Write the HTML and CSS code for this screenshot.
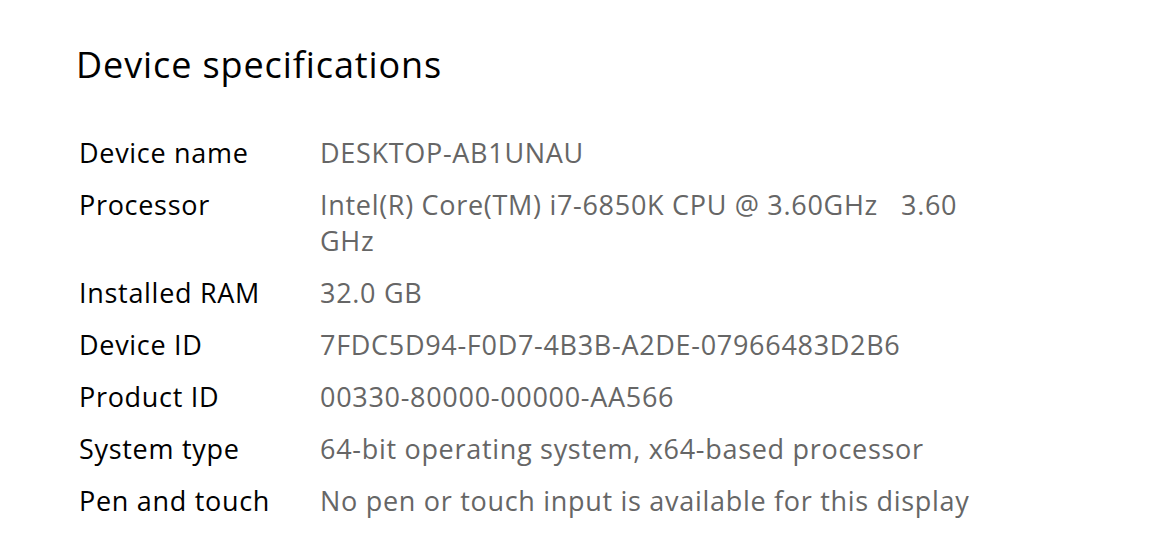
FILE: index.html
```html
<!DOCTYPE html>
<html lang="en">
<head>
    <meta charset="UTF-8">
    <meta name="viewport" content="width=device-width, initial-scale=1.0">
    <title>About</title>
    <link rel="stylesheet" href="styles.css">
</head>
<body>

    <div class="container">
        <h1>Device specifications</h1>

        <div class="specs">
            <div class="spec-row">
                <div class="spec-label">Device name</div>
                <div class="spec-value">DESKTOP-AB1UNAU</div>
            </div>
            <div class="spec-row">
                <div class="spec-label">Processor</div>
                <div class="spec-value">Intel(R) Core(TM) i7-6850K CPU @ 3.60GHz   3.60 GHz</div>
            </div>
            <div class="spec-row">
                <div class="spec-label">Installed RAM</div>
                <div class="spec-value">32.0 GB</div>
            </div>
            <div class="spec-row">
                <div class="spec-label">Device ID</div>
                <div class="spec-value">7FDC5D94-F0D7-4B3B-A2DE-07966483D2B6</div>
            </div>
            <div class="spec-row">
                <div class="spec-label">Product ID</div>
                <div class="spec-value">00330-80000-00000-AA566</div>
            </div>
            <div class="spec-row">
                <div class="spec-label">System type</div>
                <div class="spec-value">64-bit operating system, x64-based processor</div>
            </div>
            <div class="spec-row">
                <div class="spec-label">Pen and touch</div>
                <div class="spec-value">No pen or touch input is available for this display</div>
            </div>
        </div>
    </div>

</body>
</html>
```

FILE: styles.css
```css
body {
    font-family: "Open Sans", "Noto Sans", sans-serif;
    background-color: #fff;
    color: #000;
    margin: 0;
    padding: 0;
}

.container {
    padding: 43px 0 0 76px;
}

h1 {
    font-size: 36px;
    font-weight: normal;
    line-height: 44px;
    letter-spacing: 0.9px;
    margin: 0 0 48px 0;
}

.specs {
    display: flex;
    flex-direction: column;
    gap: 16px;
    margin-left: 3px;
}

.spec-row {
    display: grid;
    grid-template-columns: 241px 670px;
    font-size: 27px;
    line-height: 36px;
    letter-spacing: 0.7px;
}

.spec-value {
    color: #666;
    white-space: pre-wrap;
}
```
